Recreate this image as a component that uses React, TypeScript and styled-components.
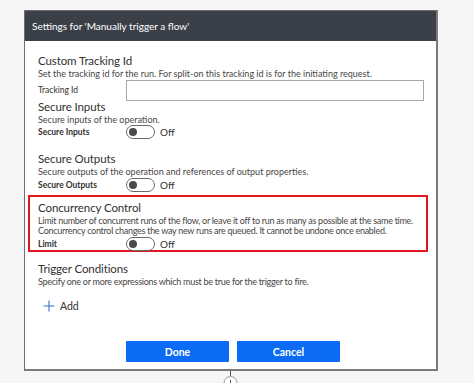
import React from 'react';
import styled, {createGlobalStyle} from 'styled-components';

const GlobalStyle = createGlobalStyle`
  html, body {
    margin: 0;
    padding: 0;
    background: #f6f6f6;
    font-family: Lato, "Open Sans", sans-serif;
  }
`;

const Page = styled.div`
  width: 474px;
  height: 383px;
  padding: 10px 0 0 24px;
  box-sizing: border-box;
  position: relative;
  overflow: hidden;
`;

const Dialog = styled.div`
  width: 414px;
  height: 361px;
  box-sizing: border-box;
  background: #fff;
  border: 1px solid #6e6e6e;
  border-right: 2px solid #7a7a7a;
  border-bottom: 2px solid #7a7a7a;
  display: flex;
  flex-direction: column;
`;

const Header = styled.div`
  height: 30px;
  flex-shrink: 0;
  background: #3b4048;
  color: #fff;
  font-size: 10px;
  display: flex;
  align-items: center;
  padding-left: 7px;
`;

const Body = styled.div`
  flex: 1;
  padding: 0 8px 0 3px;
  display: flex;
  flex-direction: column;
`;

const Section = styled.div<{ $top: number; $highlight?: boolean }>`
  margin-top: ${p => p.$top}px;
  padding: ${p => (p.$highlight ? '3px 8px 0 8px' : '0 0 0 10px')};
  border: ${p => (p.$highlight ? '2px solid #e2161d' : 'none')};
  height: ${p => (p.$highlight ? '50px' : 'auto')};
`;

const Title = styled.div`
  font-size: 11.5px;
  letter-spacing: -0.1px;
  line-height: 16px;
  color: #323130;
`;

const Desc = styled.div<{ $spacing?: number }>`
  font-size: 9px;
  line-height: 11.5px;
  letter-spacing: ${p => p.$spacing ?? 0}px;
  color: #484644;
  margin-top: -1px;
  white-space: nowrap;
`;

const Row = styled.div<{ $top?: number }>`
  display: flex;
  align-items: center;
  margin-top: ${p => p.$top ?? 0}px;
`;

const Label = styled.div<{ $bold?: boolean }>`
  width: 88px;
  font-size: 8.5px;
  font-weight: ${p => (p.$bold ? 700 : 400)};
  color: #323130;
`;

const Input = styled.div`
  width: 298px;
  height: 21px;
  box-sizing: border-box;
  border: 1px solid #a8a8a8;
`;

const Toggle = styled.div`
  width: 29px;
  height: 14px;
  box-sizing: border-box;
  border: 1px solid #6a6a6a;
  border-radius: 7px;
  display: flex;
  align-items: center;
  padding-left: 2px;

  &::before {
    content: '';
    width: 8px;
    height: 8px;
    border-radius: 50%;
    background: #4a4a4a;
  }
`;

const Off = styled.span`
  font-size: 10px;
  color: #323130;
  margin-left: 5px;
`;

const AddRow = styled.div`
  display: flex;
  align-items: center;
  margin: 13px 0 0 15px;
  font-size: 10.5px;
  color: #323130;
  gap: 5px;
`;

const Buttons = styled.div`
  display: flex;
  justify-content: center;
  gap: 8px;
  margin-top: auto;
  margin-bottom: 7px;
  padding-left: 10px;
`;

const Button = styled.button`
  width: 103px;
  height: 21px;
  border: none;
  border-radius: 1px;
  background: #0b6cf3;
  color: #fff;
  font-family: Lato, "Open Sans", sans-serif;
  font-size: 10.5px;
  font-weight: 700;
  padding: 0;
`;

const Connector = styled.svg`
  position: absolute;
  left: 222px;
  top: 371px;
`;

const App = () => (
  <Page>
    <GlobalStyle/>
    <Dialog>
      <Header>Settings for 'Manually trigger a flow'</Header>
      <Body>
        <Section $top={12}>
          <Title>Custom Tracking Id</Title>
          <Desc>Set the tracking id for the run. For split-on this tracking id is for the initiating request.</Desc>
          <Row $top={0}>
            <Label>Tracking Id</Label>
            <Input/>
          </Row>
        </Section>
        <Section $top={-2}>
          <Title>Secure Inputs</Title>
          <Desc>Secure inputs of the operation.</Desc>
          <Row>
            <Label $bold>Secure Inputs</Label>
            <Toggle/>
            <Off>Off</Off>
          </Row>
        </Section>
        <Section $top={12}>
          <Title>Secure Outputs</Title>
          <Desc>Secure outputs of the operation and references of output properties.</Desc>
          <Row>
            <Label $bold>Secure Outputs</Label>
            <Toggle/>
            <Off>Off</Off>
          </Row>
        </Section>
        <Section $top={3} $highlight>
          <Title>Concurrency Control</Title>
          <Desc $spacing={-0.28}>Limit number of concurrent runs of the flow, or leave it off to run as many as possible at the same time.</Desc>
          <Desc $spacing={-0.28}>Concurrency control changes the way new runs are queued. It cannot be undone once enabled.</Desc>
          <Row>
            <Label $bold>Limit</Label>
            <Toggle/>
            <Off>Off</Off>
          </Row>
        </Section>
        <Section $top={9}>
          <Title>Trigger Conditions</Title>
          <Desc $spacing={-0.27}>Specify one or more expressions which must be true for the trigger to fire.</Desc>
        </Section>
        <AddRow>
          <svg width="12" height="12" viewBox="0 0 12 12">
            <path d="M6 0.5v11M0.5 6h11" stroke="#3a6fc9" strokeWidth="1.1"/>
          </svg>
          Add
        </AddRow>
        <Buttons>
          <Button>Done</Button>
          <Button>Cancel</Button>
        </Buttons>
      </Body>
    </Dialog>
    <Connector width="18" height="14" viewBox="0 0 18 14">
      <path d="M8.5 0v5" stroke="#555" strokeWidth="1"/>
      <circle cx="8.5" cy="12" r="6.5" fill="#fff" stroke="#999"/>
      <path d="M8.5 9v5" stroke="#555" strokeWidth="1"/>
    </Connector>
  </Page>
);

export default App;
